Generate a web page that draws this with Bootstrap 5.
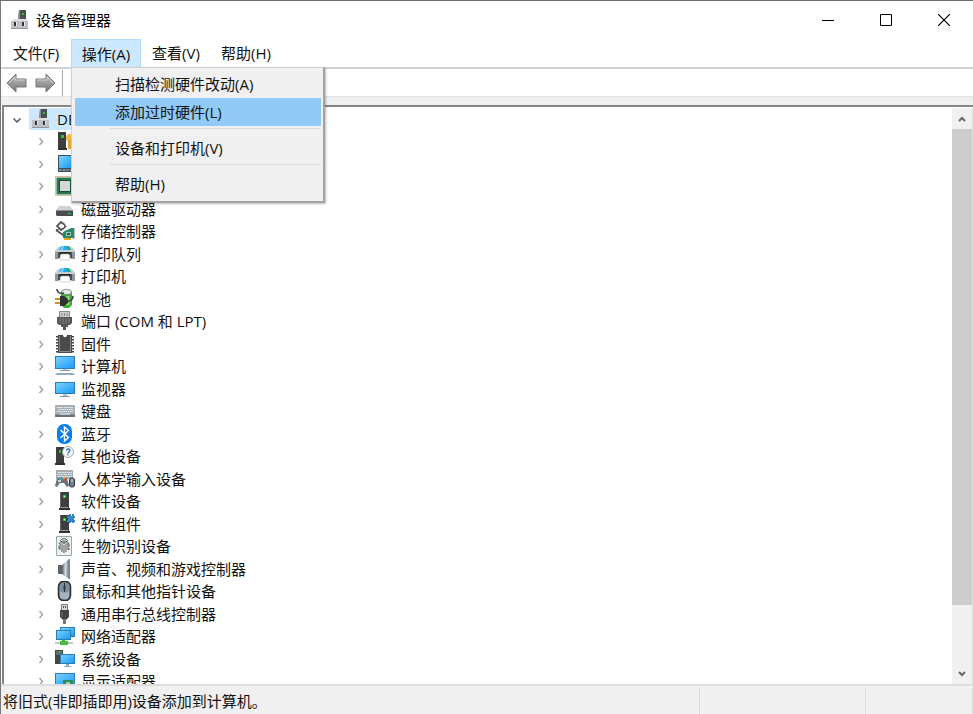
<!DOCTYPE html>
<html lang="zh-CN">
<head>
<meta charset="utf-8">
<meta name="viewport" content="width=device-width, initial-scale=1">
<title>设备管理器</title>
<link href="https://cdn.jsdelivr.net/npm/bootstrap@5.3.0/dist/css/bootstrap.min.css" rel="stylesheet">
<style>
body{font-family:"Open Sans","Noto Sans CJK SC",sans-serif;font-size:15px;line-height:22px;color:#111;background:#fff}
button{font:inherit;color:inherit;background:none;border:0;padding:0}
svg{display:block;flex:none}
.window{border-top:1px solid #6d6d6d;border-left:1px solid #777}
.titlebar{height:38px;padding-left:10px}
.titlebar h1{font-size:15px;line-height:22px;margin:0 0 0 7px;font-weight:400;color:#000}
.caption-btn{width:58px;height:38px}
.menubar{height:28px}
.menubar .menu-btn{height:28px;width:70px;white-space:nowrap}
.menubar .menu-btn.open{background:#cce8ff;border:1px solid #b3dcf9;border-bottom:0}
.toolbar{height:30px;border-top:2px solid #d0d4d7;border-bottom:1px solid #e3e3e3;padding-left:5px}
.toolbar .rule{width:1px;height:26px;background:#a8a8a8;margin-left:6px}
.strip{height:8px;background:#f0f0f0}
.popup{top:28px;left:0;width:254px;background:#f0f0f0;border:1px solid #d0d0d0;border-right:2px solid #a3a3a3;border-bottom:2px solid #a3a3a3;padding:2px 2px 3px 3px;z-index:10;box-shadow:1px 1px 2px #0004}
.popup button{height:28px;padding-left:40px;text-align:left}
.popup button.hot{background:#91c9f7}
.popup hr{margin:2px 0 5px 35px;border:0;border-top:1px solid #dadada;opacity:1}
.tree{border:solid #858585;border-width:2px 0 0 2px;margin-left:1px;padding-top:1px;min-height:0}
.root-row{height:22px;padding-left:7px}
.root-name{background:#cce8ff;height:22px;padding:0 6px 0 3px;margin-left:6px}
.root-name svg{margin-right:7px}
.toggle{width:12px;height:20px}
.tree li{height:22px;padding-left:31px}
.tree li:nth-child(even){height:23px}
.tree li .ico{margin:0 6px 0 8px}
.scroller{width:21px;background:#f0f0f0;border-right:1px solid #e2e2e2}
.scroller button{height:21px}
.thumb{background:#cdcdcd;flex:477 0 0}
.track-rest{flex:58 0 0}
.statusbar{height:30px;background:#f0f0f0;border-top:2px solid #dedede}
.statusbar>div{border-right:1px solid #dcdcdc;margin-top:2px}
.status-text{padding-left:2px}
.pane-a{width:166px}.pane-b{width:107px}
</style>
<script src="https://cdn.jsdelivr.net/npm/bootstrap@5.3.0/dist/js/bootstrap.bundle.min.js"></script>
</head>
<body>
<svg width="0" height="0" class="position-absolute" aria-hidden="true">
<defs>
<linearGradient id="blue" x1="0" y1="0" x2="1" y2="1"><stop stop-color="#7bd0ff"/><stop offset="1" stop-color="#1a9cf5"/></linearGradient>
<linearGradient id="grey" x1="0" y1="0" x2="0" y2="1"><stop stop-color="#c2c2c2"/><stop offset="1" stop-color="#777"/></linearGradient>
<linearGradient id="steel" x1="0" y1="0" x2="1" y2="0"><stop stop-color="#55606a"/><stop offset=".5" stop-color="#d5dce2"/><stop offset="1" stop-color="#6c7882"/></linearGradient>
</defs>
<symbol id="chev" viewBox="0 0 12 20"><path d="M4.500 7l3 3.500-3 3.500" fill="none" stroke="#a2a2a2" stroke-width="1.400"/></symbol>
<symbol id="pc" viewBox="0 0 18 20"><path d="M8 0h7v11H7z" fill="#4b5052"/><path d="M8 0h1v10H7z" fill="#8d9092"/><path d="M11 3h2v2h-2z" fill="#21c52e"/><path d="M2 9h14l1 3H1z" fill="#dfe0e2"/><path d="M0 11h17v8H0z" fill="#bfc0c5"/><path d="M0 18h17v1H0z" fill="#93959a"/><path d="M3 12h2v4H3zM11 12h2v4h-2z" fill="#303236"/><path d="M5 12h1v4H5zM13 12h1v4h-1z" fill="#eee"/></symbol>
<symbol id="tower" viewBox="0 0 20 20"><path d="M5 1h9v16H5z" fill="#3c3e3f"/><path d="M5 1h1v16H5z" fill="#66696b"/><path d="M8 4h3v3H8z" fill="#1ccc33"/><path d="M9 5h1v1H9z" fill="#a5ffad"/><path d="M4 17h11v2H4z" fill="#2f3132"/><path d="M6 16h7v1H6z" fill="#999"/></symbol>
<symbol id="printer" viewBox="0 0 20 20"><path d="M3 3h14l3 4H0z" fill="#c6ced4"/><path d="M6 2h8l2 4H4z" fill="#22a9f1"/><path d="M12 2h2l2 4h-4z" fill="#24b36b"/><path d="M7 2h2l-1 4H5z" fill="#76d0ff"/><path d="M0 6h20v9h-4v-4H4v4H0z" fill="#8c969d"/><path d="M0 6h20v2H0z" fill="#c8d0d5"/><path d="M3 8h14v3H3z" fill="#24282b"/><path d="M3 8h2v6H3zM15 8h2v6h-2z" fill="#4a5054"/><path d="M6 10h8l1 6H5z" fill="#fff" stroke="#aaa" stroke-width=".5"/></symbol>
<symbol id="screen" viewBox="0 0 20 20"><path d="M0 3h20v12H0z" fill="#297fae"/><path d="M1 4h18v10H1z" fill="url(#blue)"/><path d="M8 15h4v2H8z" fill="#b1c2cd"/><path d="M5 17h10v1H5z" fill="#7896a8"/></symbol>
</svg>

<div class="window vh-100 d-flex flex-column overflow-hidden">
<header class="titlebar d-flex align-items-center flex-shrink-0">
<svg width="18" height="20" aria-hidden="true"><use href="#pc"/></svg>
<h1 class="flex-grow-1">设备管理器</h1>
<button class="caption-btn d-flex justify-content-center align-items-center" aria-label="最小化"><svg width="12" height="12"><path d="M0 6.500h12" stroke="#000"/></svg></button>
<button class="caption-btn d-flex justify-content-center align-items-center" aria-label="最大化"><svg width="12" height="12"><path d="M.5.5h11v11H.5z" fill="none" stroke="#000"/></svg></button>
<button class="caption-btn d-flex justify-content-center align-items-center" aria-label="关闭"><svg width="12" height="12"><path d="M0 0l12 12M12 0L0 12" stroke="#000" stroke-width="1.200"/></svg></button>
</header>

<nav class="menubar d-flex flex-shrink-0" aria-label="菜单栏">
<button class="menu-btn">文件(F)</button>
<div class="position-relative">
<button class="menu-btn open" aria-expanded="true">操作(A)</button>
<div class="popup position-absolute d-flex flex-column" role="menu">
<button role="menuitem">扫描检测硬件改动(A)</button>
<button class="hot" role="menuitem">添加过时硬件(L)</button>
<hr>
<button role="menuitem">设备和打印机(V)</button>
<hr>
<button role="menuitem">帮助(H)</button>
</div>
</div>
<button class="menu-btn">查看(V)</button>
<button class="menu-btn">帮助(H)</button>
</nav>

<div class="toolbar d-flex align-items-center flex-shrink-0">
<button aria-label="后退"><svg width="21" height="20"><path d="M1 10L10 1v5h10v8H10v5z" fill="url(#grey)" stroke="#777"/><path d="M3 10l6-6v3h10" fill="none" stroke="#ccc"/></svg></button>
<button class="ms-2" aria-label="前进"><svg width="21" height="20"><path d="M20 10L11 1v5H1v8h10v5z" fill="url(#grey)" stroke="#777"/><path d="M2 7h10V4l6 6" fill="none" stroke="#ccc"/></svg></button>
<span class="rule"></span>
</div>
<div class="strip flex-shrink-0"></div>

<main class="tree d-flex flex-grow-1">
<div class="flex-grow-1 overflow-hidden">
<div class="root-row d-flex align-items-center">
<button class="toggle" aria-label="折叠"><svg width="12" height="20"><path d="M2.500 9.500l3.500 3.500 3.500-3.500" fill="none" stroke="#555" stroke-width="1.500"/></svg></button>
<span class="root-name d-flex align-items-center"><svg width="18" height="20" aria-hidden="true"><use href="#pc"/></svg>DE</span>
</div>
<ul class="list-unstyled mb-0">
<li class="d-flex align-items-center"><button class="toggle" aria-label="展开安全设备"><svg width="12" height="20"><use href="#chev"/></svg></button><svg class="ico" width="20" height="20"><path d="M3 1h8v16H3z" fill="#3c3e3f"/><path d="M6 4h3v3H6z" fill="#1ccc33"/><path d="M3 17h9v2H3z" fill="#2f3132"/><circle cx="15" cy="7" r="4" fill="#f1bc45"/><path d="M13 9h4v9h-4z" fill="#e3a62f"/></svg></li>
<li class="d-flex align-items-center"><button class="toggle" aria-label="展开便携设备"><svg width="12" height="20"><use href="#chev"/></svg></button><svg class="ico" width="20" height="20"><path d="M3 1h15v17H3z" fill="#3d4f5b"/><path d="M4 2h13v12H4z" fill="url(#blue)"/><path d="M4 15h13v2H4z" fill="#82909a"/><path d="M7 15v2M11 15v2M14 15v2" stroke="#3d4f5b"/></svg></li>
<li class="d-flex align-items-center"><button class="toggle" aria-label="展开处理器"><svg width="12" height="20"><use href="#chev"/></svg></button><svg class="ico" width="20" height="20"><path d="M.5.5h19v19H.5z" fill="#fff" stroke="#b3862c" stroke-dasharray="1 1"/><path d="M1.500 1.500h17v17h-17z" fill="#2c7550"/><path d="M4 4h12v12H4z" fill="#174f37"/><path d="M5 5h10v10H5z" fill="#d5d8d6"/></svg></li>
<li class="d-flex align-items-center"><button class="toggle" aria-label="展开"><svg width="12" height="20"><use href="#chev"/></svg></button><svg class="ico" width="20" height="20"><path d="M4 7h11l3 4v2H1v-2z" fill="#d0d2d5"/><path d="M1 11h17v6H2l-1-1z" fill="#4a4d4f"/><path d="M1 11h17v1H1z" fill="#8e9193"/><path d="M13 14h3v1h-3z" fill="#27d942"/></svg>磁盘驱动器</li>
<li class="d-flex align-items-center"><button class="toggle" aria-label="展开"><svg width="12" height="20"><use href="#chev"/></svg></button><svg class="ico" width="20" height="20"><path d="M10 4L6 1 2 5l4 4 3-2M1 9l7 5 3-4" fill="none" stroke="#555" stroke-width="1.800"/><path d="M9 4l3 1-3 3zM1 8l3 0-2 3z" fill="#555"/><path d="M8 11l8-4h3v10H8z" fill="#278b62"/><path d="M11 11h5v4h-5z" fill="#96cbb3"/><path d="M12 12h3v2h-3z" fill="#275f4b"/><path d="M19 7v11" stroke="#777"/><path d="M9 17h7v2H9z" fill="#f0a51f"/></svg>存储控制器</li>
<li class="d-flex align-items-center"><button class="toggle" aria-label="展开"><svg width="12" height="20"><use href="#chev"/></svg></button><svg class="ico" width="20" height="20"><use href="#printer"/></svg>打印队列</li>
<li class="d-flex align-items-center"><button class="toggle" aria-label="展开"><svg width="12" height="20"><use href="#chev"/></svg></button><svg class="ico" width="20" height="20"><use href="#printer"/></svg>打印机</li>
<li class="d-flex align-items-center"><button class="toggle" aria-label="展开"><svg width="12" height="20"><use href="#chev"/></svg></button><svg class="ico" width="20" height="20"><path d="M6 3l2-2h6l3 2v13l-3 3H9l-3-3z" fill="#43a835"/><ellipse cx="11.500" cy="3" rx="5" ry="2.500" fill="#e7e9e8" stroke="#888"/><path d="M13 7v9" stroke="#8ee070" stroke-width="3"/><path d="M2 0c0 4 4 5 7 4M9 13c6 0 9-2 9-6" fill="none" stroke="#444" stroke-width="1.600"/><path d="M5 7h4l4 3v4l-4 3H5z" fill="#303331"/><path d="M0 10h5M0 14h5" stroke="#c69428" stroke-width="2"/></svg>电池</li>
<li class="d-flex align-items-center"><button class="toggle" aria-label="展开"><svg width="12" height="20"><use href="#chev"/></svg></button><svg class="ico" width="20" height="20"><path d="M4.500.5h10v6h-10z" fill="#cfcfcf" stroke="#888"/><path d="M7 2v3M9.500 2v3M12 2v3" stroke="#888"/><path d="M2 6h15v6l-2 2H4l-2-2z" fill="#555"/><path d="M5 7v5M8 7v6M11 7v6M14 7v5" stroke="#858585"/><path d="M6 14h7v2h-2v3H8v-3H6z" fill="#555"/></svg>端口 (COM 和 LPT)</li>
<li class="d-flex align-items-center"><button class="toggle" aria-label="展开"><svg width="12" height="20"><use href="#chev"/></svg></button><svg class="ico" width="20" height="20"><path d="M3 1h5c0 3 4 3 4 0h5v18H3z" fill="#4b4b4b"/><path d="M2 2v17M18 2v17" stroke="#444" stroke-width="2" stroke-dasharray="1.500 1.500"/><path d="M4.500 2v15.500h11V2" fill="none" stroke="#888"/></svg>固件</li>
<li class="d-flex align-items-center"><button class="toggle" aria-label="展开"><svg width="12" height="20"><use href="#chev"/></svg></button><svg class="ico" width="20" height="20"><path d="M0 0h20v13H0z" fill="#297fae"/><path d="M1 1h18v11H1z" fill="url(#blue)"/><path d="M8 13h4v2H8z" fill="#b1c2cd"/><path d="M5 14h10v1H5z" fill="#7896a8"/><path d="M2 17h16l2 2H0z" fill="#8facc2"/></svg>计算机</li>
<li class="d-flex align-items-center"><button class="toggle" aria-label="展开"><svg width="12" height="20"><use href="#chev"/></svg></button><svg class="ico" width="20" height="20"><use href="#screen"/></svg>监视器</li>
<li class="d-flex align-items-center"><button class="toggle" aria-label="展开"><svg width="12" height="20"><use href="#chev"/></svg></button><svg class="ico" width="20" height="20"><path d="M0 4h20v12H0z" fill="#8a949b"/><path d="M0 4h20v9H0z" fill="#a7b0b6"/><path d="M2 6.500h16M3 8.500h15M2 10.500h16" stroke="#eef2f4" stroke-dasharray="1.500 .7"/><path d="M5 13h10" stroke="#eef2f4"/><path d="M0 14h20v2H0z" fill="#68737a"/></svg>键盘</li>
<li class="d-flex align-items-center"><button class="toggle" aria-label="展开"><svg width="12" height="20"><use href="#chev"/></svg></button><svg class="ico" width="20" height="20"><rect x="2" width="15" height="20" rx="7" fill="#087fef"/><path d="M5.500 6l8 7.500-4 3.500V3l4 3.500-8 7.500" fill="none" stroke="#fff" stroke-width="1.400"/></svg>蓝牙</li>
<li class="d-flex align-items-center"><button class="toggle" aria-label="展开"><svg width="12" height="20"><use href="#chev"/></svg></button><svg class="ico" width="20" height="20"><path d="M1 1h8v16H1z" fill="#3c3e3f"/><path d="M4 4h2v3H4z" fill="#1ccc33"/><path d="M0 17h10v2H0z" fill="#2f3132"/><circle cx="13" cy="6" r="5.500" fill="#fafafa" stroke="#aaa"/><path d="M11.500 4.500c0-2 3.500-2 3.500 0 0 1.500-2 1.300-2 3M13 8.300v1.200" fill="none" stroke="#2378b7" stroke-width="1.300"/></svg>其他设备</li>
<li class="d-flex align-items-center"><button class="toggle" aria-label="展开"><svg width="12" height="20"><use href="#chev"/></svg></button><svg class="ico" width="20" height="20"><path d="M1 1h17v9H1z" fill="#a4adb3"/><path d="M3 3.500h14M2 5.500h15M3 7.500h14" stroke="#eef2f4" stroke-dasharray="1.500 .7"/><path d="M2 9h10l2 8-2 1-3-4H5l-3 4-2-1z" fill="#6a747b"/><path d="M3 11h3v2H3z" fill="#d0d6da"/><path d="M4 8h3v3H4z" fill="#26a8ed"/><path d="M8 8h2v2H8z" fill="#eca32b"/><path d="M9 10h2v2H9z" fill="#d94b37"/><rect x="14.500" y="9" width="5" height="9" rx="2" fill="#708291" stroke="#333"/><path d="M17 10v3" stroke="#ddd"/></svg>人体学输入设备</li>
<li class="d-flex align-items-center"><button class="toggle" aria-label="展开"><svg width="12" height="20"><use href="#chev"/></svg></button><svg class="ico" width="20" height="20"><use href="#tower"/></svg>软件设备</li>
<li class="d-flex align-items-center"><button class="toggle" aria-label="展开"><svg width="12" height="20"><use href="#chev"/></svg></button><svg class="ico" width="20" height="20"><use href="#tower"/><path d="M12 2h2V0h2v2h1V0h2v2h1v2h-1v2h1v2h-1v1h-2V8h-1v1h-2V8h-2V6h1V4h-1z" fill="#3287c4"/></svg>软件组件</li>
<li class="d-flex align-items-center"><button class="toggle" aria-label="展开"><svg width="12" height="20"><use href="#chev"/></svg></button><svg class="ico" width="20" height="20"><path d="M1.500.5h15v19h-15z" fill="#eef1ef" stroke="#94aea6"/><path d="M5 5c2-3 6-3 8 0M4 8c1-4 9-4 10 0v3M5 14V9c1-4 7-4 8 0v5M7 16V9c0-2 4-2 4 0v7M9 9v8M4 10v3M14 12v2" fill="none" stroke="#525855"/></svg>生物识别设备</li>
<li class="d-flex align-items-center"><button class="toggle" aria-label="展开"><svg width="12" height="20"><use href="#chev"/></svg></button><svg class="ico" width="20" height="20"><path d="M3 6h4v9H3z" fill="#5b656d"/><path d="M7 6l7-6v20l-7-5z" fill="url(#steel)"/><path d="M14 0h1v20h-1z" fill="#7c8992"/></svg>声音、视频和游戏控制器</li>
<li class="d-flex align-items-center"><button class="toggle" aria-label="展开"><svg width="12" height="20"><use href="#chev"/></svg></button><svg class="ico" width="20" height="20"><rect x="3.500" y=".5" width="12" height="19" rx="5" fill="#7b8f9f" stroke="#282d31" stroke-width="1.500"/><path d="M5 10c1 2 8 2 9 0v6c-2 3-7 3-9 0z" fill="#a5b3bd"/><path d="M9.500 2v9" stroke="#333"/><rect x="8.500" y="4" width="2" height="5" rx="1" fill="#30383e"/></svg>鼠标和其他指针设备</li>
<li class="d-flex align-items-center"><button class="toggle" aria-label="展开"><svg width="12" height="20"><use href="#chev"/></svg></button><svg class="ico" width="20" height="20"><path d="M6.500.5h6v6h-6z" fill="#d7d7d7" stroke="#777"/><path d="M8 2h1v2H8zM10 2h1v2h-1z" fill="#555"/><path d="M5 6h9v7l-3 3H8l-3-3z" fill="#444"/><path d="M7 8v5" stroke="#777"/><path d="M8 15h3v5H8z" fill="#777"/></svg>通用串行总线控制器</li>
<li class="d-flex align-items-center"><button class="toggle" aria-label="展开"><svg width="12" height="20"><use href="#chev"/></svg></button><svg class="ico" width="20" height="20"><path d="M5 1h15v10H5z" fill="#297fae"/><path d="M6 2h13v8H6z" fill="url(#blue)"/><path d="M1 4h15v10H1z" fill="#297fae"/><path d="M2 5h13v8H2z" fill="url(#blue)"/><path d="M7 14h3v2H7z" fill="#40aa43"/><path d="M0 16h18v2H0z" fill="#bfc9c4"/><path d="M5 15h8v4H5z" fill="#43bd43"/></svg>网络适配器</li>
<li class="d-flex align-items-center"><button class="toggle" aria-label="展开"><svg width="12" height="20"><use href="#chev"/></svg></button><svg class="ico" width="20" height="20"><path d="M0 1h8v14H0z" fill="#424749"/><path d="M1 3h6M1 5h6" stroke="#8a9295"/><path d="M4 2h2v1H4z" fill="#27d942"/><path d="M5 5h15v10H5z" fill="#297fae"/><path d="M6 6h13v8H6z" fill="url(#blue)"/><path d="M11 15h3v2h2v1H9v-1h2z" fill="#94abb8"/></svg>系统设备</li>
<li class="d-flex align-items-center"><button class="toggle" aria-label="展开"><svg width="12" height="20"><use href="#chev"/></svg></button><svg class="ico" width="20" height="20"><path d="M0 2h20v13H0z" fill="#297fae"/><path d="M1 3h18v11H1z" fill="url(#blue)"/><path d="M8 9h10v8H8z" fill="#2a8a60"/><path d="M11 11h4v3h-4z" fill="#a6c9b9"/></svg>显示适配器</li>
</ul>
</div>
<div class="scroller d-flex flex-column flex-shrink-0">
<button class="d-flex justify-content-center align-items-center" aria-label="向上滚动"><svg width="8" height="6"><path d="M1 5l3-3 3 3" fill="none" stroke="#666" stroke-width="2"/></svg></button>
<div class="thumb"></div><div class="track-rest"></div>
<button class="d-flex justify-content-center align-items-center" aria-label="向下滚动"><svg width="8" height="6"><path d="M1 1l3 3 3-3" fill="none" stroke="#666" stroke-width="2"/></svg></button>
</div>
</main>

<footer class="statusbar d-flex flex-shrink-0">
<div class="status-text flex-grow-1 d-flex align-items-center" role="status">将旧式(非即插即用)设备添加到计算机。</div>
<div class="pane-a"></div>
<div class="pane-b"></div>
</footer>
</div>
</body>
</html>
